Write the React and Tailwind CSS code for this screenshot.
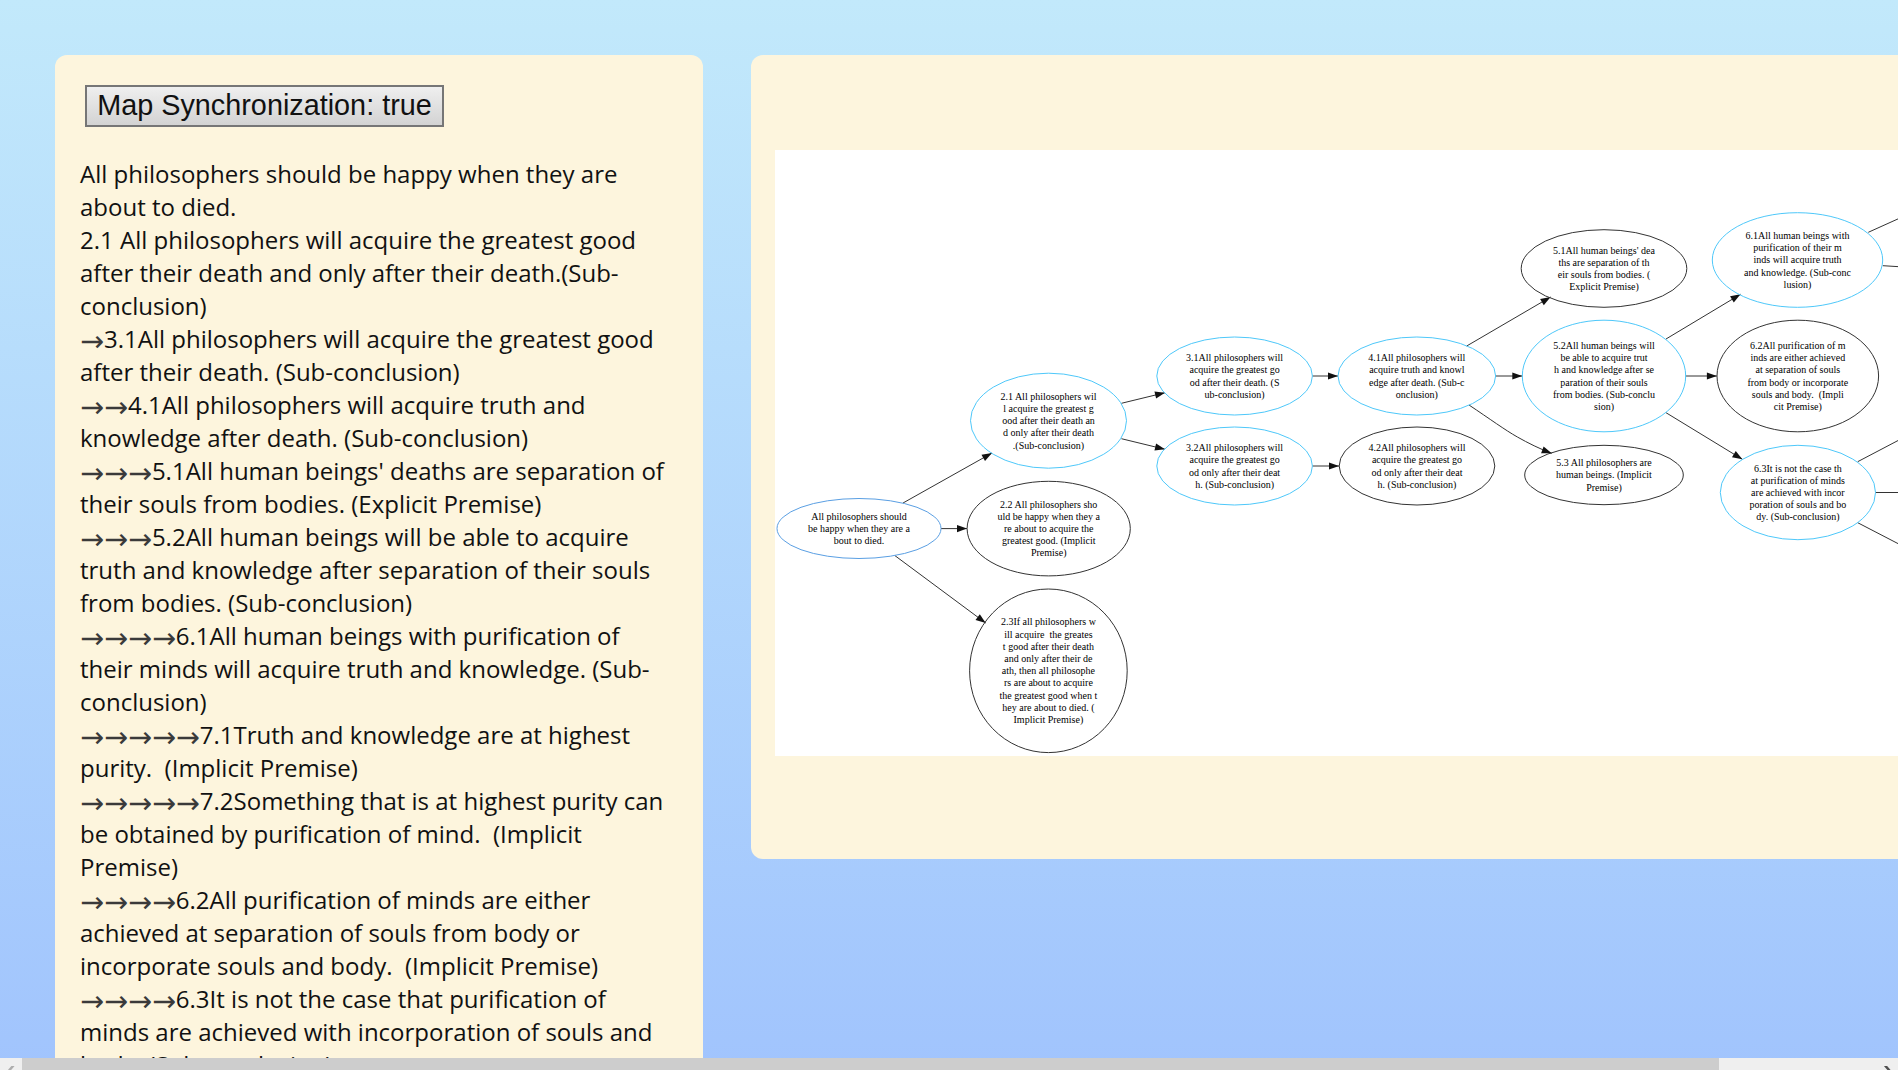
const nodes = [
  { cx: 859, cy: 528.5, rx: 82, ry: 30, s: "#5a9fe3", l: ["All philosophers should", "be happy when they are a", "bout to died."] },
  { cx: 1048.5, cy: 420.7, rx: 78, ry: 47.5, s: "#4ec8fa", l: ["2.1 All philosophers wil", "l acquire the greatest g", "ood after their death an", "d only after their death", ".(Sub-conclusion)"] },
  { cx: 1048.7, cy: 528.6, rx: 81.6, ry: 47.3, s: "#333333", l: ["2.2 All philosophers sho", "uld be happy when they a", "re about to acquire the", "greatest good. (Implicit", "Premise)"] },
  { cx: 1048.4, cy: 670.8, rx: 78.8, ry: 81.8, s: "#333333", l: ["2.3If all philosophers w", "ill acquire  the greates", "t good after their death", "and only after their de", "ath, then all philosophe", "rs are about to acquire", "the greatest good when t", "hey are about to died. (", "Implicit Premise)"] },
  { cx: 1234.6, cy: 376, rx: 77.8, ry: 39, s: "#4ec8fa", l: ["3.1All philosophers will", "acquire the greatest go", "od after their death. (S", "ub-conclusion)"] },
  { cx: 1234.6, cy: 466, rx: 77.8, ry: 39, s: "#4ec8fa", l: ["3.2All philosophers will", "acquire the greatest go", "od only after their deat", "h. (Sub-conclusion)"] },
  { cx: 1416.8, cy: 376, rx: 78.8, ry: 39, s: "#4ec8fa", l: ["4.1All philosophers will", "acquire truth and knowl", "edge after death. (Sub-c", "onclusion)"] },
  { cx: 1417, cy: 466, rx: 77.8, ry: 39, s: "#333333", l: ["4.2All philosophers will", "acquire the greatest go", "od only after their deat", "h. (Sub-conclusion)"] },
  { cx: 1604, cy: 268.5, rx: 82.8, ry: 38.8, s: "#333333", l: ["5.1All human beings' dea", "ths are separation of th", "eir souls from bodies. (", "Explicit Premise)"] },
  { cx: 1604, cy: 376, rx: 81.7, ry: 55.8, s: "#4ec8fa", l: ["5.2All human beings will", "be able to acquire trut", "h and knowledge after se", "paration of their souls", "from bodies. (Sub-conclu", "sion)"] },
  { cx: 1604, cy: 475, rx: 79.3, ry: 29.7, s: "#333333", l: ["5.3 All philosophers are", "human beings. (Implicit", "Premise)"] },
  { cx: 1797.5, cy: 260, rx: 85.2, ry: 47.3, s: "#4ec8fa", l: ["6.1All human beings with", "purification of their m", "inds will acquire truth", "and knowledge. (Sub-conc", "lusion)"] },
  { cx: 1797.8, cy: 376, rx: 80.8, ry: 55.8, s: "#333333", l: ["6.2All purification of m", "inds are either achieved", "at separation of souls", "from body or incorporate", "souls and body.  (Impli", "cit Premise)"] },
  { cx: 1797.9, cy: 492.5, rx: 77.6, ry: 47.2, s: "#4ec8fa", l: ["6.3It is not the case th", "at purification of minds", "are achieved with incor", "poration of souls and bo", "dy. (Sub-conclusion)"] },
];

const edges = [
  [903, 503, 992, 453],
  [941, 528.6, 967, 528.6],
  [895, 555.7, 985.7, 623],
  [1121.4, 403.3, 1165, 392.7],
  [1121.4, 438.7, 1165, 449.3],
  [1312.5, 376, 1338, 376],
  [1312.5, 466, 1339, 466],
  [1466.7, 346, 1550.6, 297],
  [1495.6, 376, 1522.3, 376],
  [1666, 339, 1740.5, 294.3],
  [1685.6, 376, 1716.9, 376],
  [1666, 412.7, 1742.4, 459.3],
];

const stubs = [
  [1868.3, 232.3, 1920, 209],
  [1882.8, 265.7, 1920, 268],
  [1857.7, 461.7, 1920, 429],
  [1875.5, 492.5, 1920, 492.5],
  [1857.7, 522.7, 1920, 555],
];

const OX = 775;
const OY = 150;

function Arrow({ x, y, from }) {
  const a = Math.atan2(y - from[1], x - from[0]);
  const L = 10;
  const W = 3.6;
  const bx = x - L * Math.cos(a);
  const by = y - L * Math.sin(a);
  const nx = -Math.sin(a) * W;
  const ny = Math.cos(a) * W;
  return <polygon points={`${x},${y} ${bx + nx},${by + ny} ${bx - nx},${by - ny}`} fill="#111111" />;
}

function Graph() {
  return (
    <svg width="1298" height="606" viewBox={`${OX} ${OY} 1298 606`} className="block">
      {edges.map((e, i) => (
        <g key={i}>
          <line x1={e[0]} y1={e[1]} x2={e[2]} y2={e[3]} stroke="#333333" strokeWidth="1" />
          <Arrow x={e[2]} y={e[3]} from={[e[0], e[1]]} />
        </g>
      ))}
      <path d="M1469 405 C1490 419 1505 430 1517.4 437 C1528 443 1540 449 1551.7 453.3" fill="none" stroke="#333333" strokeWidth="1" />
      <Arrow x={1551.7} y={453.3} from={[1535, 447]} />
      {stubs.map((e, i) => (
        <line key={i} x1={e[0]} y1={e[1]} x2={e[2]} y2={e[3]} stroke="#333333" strokeWidth="1" />
      ))}
      {nodes.map((n, i) => {
        const start = n.cy - ((n.l.length - 1) / 2) * 12.2 + 3.4;
        return (
          <g key={i}>
            <ellipse cx={n.cx} cy={n.cy} rx={n.rx} ry={n.ry} fill="none" stroke={n.s} strokeWidth="1" />
            <text textAnchor="middle" xmlSpace="preserve" className="fill-black text-[10px] font-['Liberation_Serif',serif]">
              {n.l.map((t, j) => (
                <tspan key={j} x={n.cx} y={start + j * 12.2}>{t}</tspan>
              ))}
            </text>
          </g>
        );
      })}
    </svg>
  );
}

const text = [
  [0, "All philosophers should be happy when they are about to died."],
  [0, "2.1 All philosophers will acquire the greatest good after their death and only after their death.(Sub-conclusion)"],
  [1, "3.1All philosophers will acquire the greatest good after their death. (Sub-conclusion)"],
  [2, "4.1All philosophers will acquire truth and knowledge after death. (Sub-conclusion)"],
  [3, "5.1All human beings' deaths are separation of their souls from bodies. (Explicit Premise)"],
  [3, "5.2All human beings will be able to acquire truth and knowledge after separation of their souls from bodies. (Sub-conclusion)"],
  [4, "6.1All human beings with purification of their minds will acquire truth and knowledge. (Sub-conclusion)"],
  [5, "7.1Truth and knowledge are at highest purity.  (Implicit Premise)"],
  [5, "7.2Something that is at highest purity can be obtained by purification of mind.  (Implicit Premise)"],
  [4, "6.2All purification of minds are either achieved at separation of souls from body or incorporate souls and body.  (Implicit Premise)"],
  [4, "6.3It is not the case that purification of minds are achieved with incorporation of souls and body. (Sub-conclusion)"],
];

export default function App() {
  return (
    <div className="h-screen overflow-hidden flex flex-col bg-gradient-to-b from-[#c2e9fb] to-[#a1c4fd]">
      <div className="flex-1 min-h-0 overflow-hidden flex items-start pt-[55px] pl-[55px] gap-[48px]">
        <div className="w-[648px] shrink-0 bg-[#fdf5dd] rounded-[12px] pt-[30px] pl-[25px] pr-[25px] pb-[30px]">
          <button className="block ml-[5px] w-[359px] h-[42px] pb-[2px] border-2 border-[#767676] bg-gradient-to-b from-[#efefef] to-[#d3d3d3] text-[#111111] text-[28.8px] leading-none font-['Liberation_Sans',sans-serif]">
            Map Synchronization: true
          </button>
          <div className="mt-[30px] text-[24px] leading-[33px] text-[#111111] font-['Open_Sans',sans-serif]">
            {text.map(([depth, t], i) => (
              <div key={i} className="whitespace-pre-wrap">
                {depth > 0 && (
                  <span className="font-['DejaVu_Sans',sans-serif] text-[28.6px] leading-[16px] align-[-2.5px] text-[#3a3a3a]">{"→".repeat(depth)}</span>
                )}
                {t}
              </div>
            ))}
          </div>
        </div>
        <div className="w-[1322px] h-[804px] shrink-0 bg-[#fdf5dd] rounded-[12px] pt-[95px] pl-[24px]">
          <div className="bg-white w-[1298px] h-[606px]">
            <Graph />
          </div>
        </div>
      </div>
      <div className="h-[12px] shrink-0 bg-[#efefef] flex overflow-hidden">
        <div className="w-[22px] shrink-0 flex justify-center pt-[8px]">
          <svg width="10" height="4" viewBox="0 0 10 4"><path d="M7.5 -0.5 L3 4.5" stroke="#adadad" strokeWidth="2.5" fill="none" /></svg>
        </div>
        <div className="w-[1697px] bg-[#cdcdcd]" />
        <div className="flex-1 flex justify-end pr-[6px] pt-[8px]">
          <svg width="10" height="4" viewBox="0 0 10 4"><path d="M3 -0.5 L7.5 4.5" stroke="#505050" strokeWidth="2.5" fill="none" /></svg>
        </div>
      </div>
    </div>
  );
}
